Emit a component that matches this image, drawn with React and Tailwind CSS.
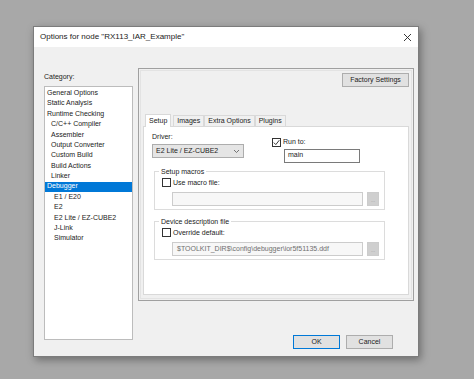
const categories = [
  { label: "General Options", indent: false },
  { label: "Static Analysis", indent: false },
  { label: "Runtime Checking", indent: false },
  { label: "C/C++ Compiler", indent: true },
  { label: "Assembler", indent: true },
  { label: "Output Converter", indent: true },
  { label: "Custom Build", indent: true },
  { label: "Build Actions", indent: true },
  { label: "Linker", indent: true },
  { label: "Debugger", indent: false, selected: true },
  { label: "E1 / E20", indent: true, deep: true },
  { label: "E2", indent: true, deep: true },
  { label: "E2 Lite / EZ-CUBE2", indent: true, deep: true },
  { label: "J-Link", indent: true, deep: true },
  { label: "Simulator", indent: true, deep: true },
];

function CheckBox({ checked }) {
  return (
    <span className="flex h-[9px] w-[9px] items-center justify-center border border-[#333] bg-white">
      {checked && (
        <svg width="7" height="7" viewBox="0 0 7 7">
          <path d="M0.8 3.6 L2.8 5.6 L6.3 1.2" fill="none" stroke="#222" strokeWidth="0.9" />
        </svg>
      )}
    </span>
  );
}

function Tab({ label, active }) {
  return active ? (
    <div className="relative z-10 -mb-px flex h-[13px] items-center border border-b-0 border-[#d9d9d9] bg-white px-[3px]">
      {label}
    </div>
  ) : (
    <div className="flex h-[11px] items-center border border-b-0 border-[#d9d9d9] bg-[#f0f0f0] px-[3px]">
      {label}
    </div>
  );
}

function PathRow({ value }) {
  return (
    <div className="ml-[10px] mt-[4px] flex gap-[4px]">
      <div className="flex h-[14px] w-[191px] items-center overflow-hidden whitespace-nowrap border border-[#cccccc] bg-[#f7f7f7] px-[4px] text-[#707070]">
        {value}
      </div>
      <div className="flex h-[14px] w-[12px] items-end justify-center border border-[#cccccc] bg-[#cfcfcf] pb-[2px] text-[5px] leading-none text-[#999]">
        ...
      </div>
    </div>
  );
}

export default function App() {
  return (
    <div
      className="h-[379px] w-[474px] overflow-hidden bg-[#a8a8a8] pl-[33px] pt-[26px] text-[7px] text-[#222]"
      style={{ fontFamily: '"Liberation Sans", Arial, sans-serif' }}
    >
      <div className="flex h-[331px] w-[386px] flex-col border border-[#7c7c7c] bg-[#f0f0f0] shadow-[2px_3px_8px_rgba(0,0,0,0.35)]">
        <div className="flex h-[20px] items-center justify-between bg-white pl-[6px] pr-[6px]">
          <span className="text-[8px] text-[#222]">Options for node "RX113_IAR_Example"</span>
          <svg width="9" height="9" viewBox="0 0 9 9">
            <path d="M1 1 L8 8 M8 1 L1 8" stroke="#222" strokeWidth="0.9" />
          </svg>
        </div>

        <div className="flex flex-1 pl-[10px] pt-[21px]">
          <div className="flex w-[89px] flex-col">
            <div className="h-[18px] pt-[4px]">Category:</div>
            <div className="h-[254px] border border-[#bcbcbc] bg-white pt-[1px]">
              {categories.map((c) => (
                <div
                  key={c.label}
                  className={
                    "flex h-[10.4px] items-center whitespace-nowrap " +
                    (c.selected ? "bg-[#0078d7] text-white " : "") +
                    (c.deep ? "pl-[9px]" : c.indent ? "pl-[6px]" : "pl-[2px]")
                  }
                >
                  {c.label}
                </div>
              ))}
            </div>
          </div>

          <div className="ml-[5px] flex w-[276px] flex-col">
            <div className="flex h-[233px] flex-col border border-[#a0a0a0] p-px">
              <div className="flex flex-1 flex-col border border-[#e3e3e3] pb-[3px] pl-[2px] pr-[2px] pt-[2px]">
                <div className="flex justify-end">
                  <div className="flex h-[14px] w-[67px] items-center justify-center border border-[#adadad] bg-[#e1e1e1]">
                    Factory Settings
                  </div>
                </div>

                <div className="mt-[27px] flex items-end pl-[2px]">
                  <Tab label="Setup" active />
                  <div className="ml-[2px] flex">
                    <Tab label="Images" />
                    <Tab label="Extra Options" />
                    <Tab label="Plugins" />
                  </div>
                </div>

                <div className="flex flex-1 flex-col border border-[#d9d9d9] bg-white pl-[8px] pt-[5px]">
                  <div className="flex">
                    <div className="flex w-[120px] flex-col">
                      <div className="h-[12px]">Driver:</div>
                      <div className="flex h-[14px] w-[92px] items-center justify-between border border-[#adadad] bg-[#e5e5e5] px-[3px]">
                        <span>E2 Lite / EZ-CUBE2</span>
                        <svg width="7" height="5" viewBox="0 0 7 5">
                          <path d="M1 1 L3.5 3.5 L6 1" fill="none" stroke="#555" strokeWidth="0.8" />
                        </svg>
                      </div>
                    </div>
                    <div className="flex flex-col pt-[5px]">
                      <div className="flex items-center gap-[2px]">
                        <CheckBox checked />
                        <span>Run to:</span>
                      </div>
                      <div className="ml-[12px] mt-[1px] flex h-[14px] w-[76px] items-center border border-[#7a7a7a] bg-white px-[3px]">
                        main
                      </div>
                    </div>
                  </div>

                  <fieldset className="ml-[2px] mt-[4px] h-[43px] w-[231px] border border-[#dcdcdc] pl-[7px]">
                    <legend className="-ml-[3px] px-[2px] leading-[9px]">Setup macros</legend>
                    <div className="mt-[2px] flex items-center gap-[2px]">
                      <CheckBox />
                      <span>Use macro file:</span>
                    </div>
                    <PathRow value="" />
                  </fieldset>

                  <fieldset className="ml-[2px] mt-[7px] h-[43px] w-[231px] border border-[#dcdcdc] pl-[7px]">
                    <legend className="-ml-[3px] px-[2px] leading-[9px]">Device description file</legend>
                    <div className="mt-[2px] flex items-center gap-[2px]">
                      <CheckBox />
                      <span>Override default:</span>
                    </div>
                    <PathRow value="$TOOLKIT_DIR$\config\debugger\ior5f51135.ddf" />
                  </fieldset>
                </div>
              </div>
            </div>

            <div className="mr-[21px] mt-[34px] flex justify-end gap-[6px]">
              <div className="flex h-[14px] w-[47px] items-center justify-center border border-[#0078d7] bg-[#e1e1e1]">
                OK
              </div>
              <div className="flex h-[14px] w-[47px] items-center justify-center border border-[#adadad] bg-[#e1e1e1]">
                Cancel
              </div>
            </div>
          </div>
        </div>
      </div>
    </div>
  );
}
